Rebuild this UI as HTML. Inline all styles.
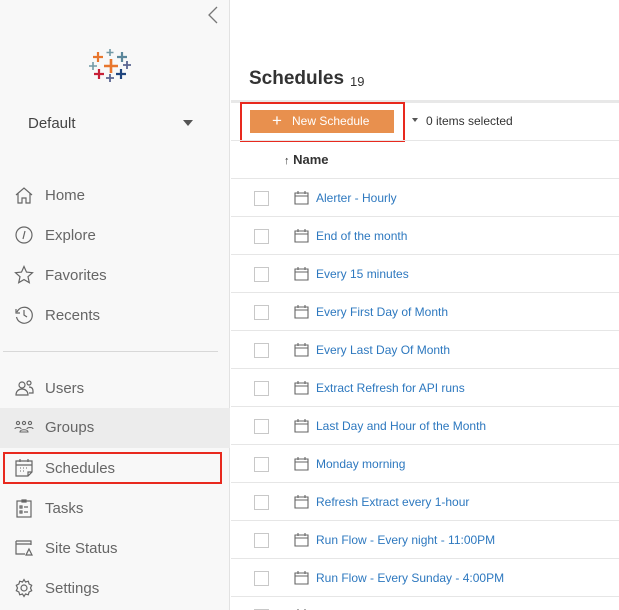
<!DOCTYPE html>
<html style="overflow:hidden;width:619px;height:610px"><head><style>
*{margin:0;padding:0;box-sizing:border-box}
body{width:619px;height:610px;overflow:hidden;background:#fff;font-family:"Liberation Sans",Arial,sans-serif;position:relative}
.side{position:absolute;left:0;top:0;width:230px;height:610px;background:#f8f8f8;border-right:1px solid #e2e2e2}
.nav{position:absolute;left:0;width:230px;height:40px;display:flex;align-items:center;font-size:15px;color:#666}
.nav svg{position:absolute;left:14px;top:9px}
.nav span{position:absolute;left:45px;top:11px}
.row{position:absolute;left:231px;right:0;height:38px;border-top:1px solid #e6e6e6}
.cb{position:absolute;left:23px;top:12px;width:15px;height:15px;border:1px solid #c8c8c8;background:#fff}
.cal{position:absolute;left:63px;top:11px}
.lk{position:absolute;left:85px;top:12px;font-size:12px;color:#2d78bf}
</style></head><body>
<div class="side">
<svg style="position:absolute;left:207px;top:6px" width="12" height="18"><path d="M10 1 L2 9 L10 17" stroke="#777" stroke-width="1.3" fill="none"/></svg>
<svg style="position:absolute;left:88px;top:47px" width="46" height="42">
<g stroke-width="2.2" fill="none">
<path d="M10 5v10M5 10h10" stroke="#e8762d"/>
<path d="M22 2v7M18.5 5.5h7" stroke="#7199a6" stroke-width="1.6"/>
<path d="M34 5v10M29 10h10" stroke="#5b879b"/>
<path d="M5 15v8M1 19h8" stroke="#7199a6" stroke-width="1.6"/>
<path d="M23 12v14M16 19h14" stroke="#e8762d" stroke-width="2.6"/>
<path d="M39 14v8M35 18h8" stroke="#5b6591" stroke-width="1.8"/>
<path d="M11 22v10M6 27h10" stroke="#c72037"/>
<path d="M33 22v10M28 27h10" stroke="#1f457e"/>
<path d="M22 27v8M18 31h8" stroke="#5b6591" stroke-width="1.8"/>
</g></svg>
<div style="position:absolute;left:28px;top:115px;font-size:15px;color:#444">Default</div>
<div style="position:absolute;left:183px;top:120px;border-left:5px solid transparent;border-right:5px solid transparent;border-top:6px solid #555"></div>
<div class="nav" style="top:176px"><svg width="20" height="20" fill="none" stroke="#666" stroke-width="1.2"><path d="M2 10L10 3l8 7M4 8v10h4v-5h4v5h4V8"/></svg><span>Home</span></div>
<div class="nav" style="top:216px"><svg width="20" height="20" fill="none" stroke="#666" stroke-width="1.2"><circle cx="10" cy="10" r="8"/><path d="M11 6l-2 8"/></svg><span>Explore</span></div>
<div class="nav" style="top:256px"><svg width="20" height="20" fill="none" stroke="#666" stroke-width="1.2"><path d="M10 1.5l2.5 5.6 6 .6-4.5 4 1.3 6-5.3-3.1-5.3 3.1 1.3-6-4.5-4 6-.6z"/></svg><span>Favorites</span></div>
<div class="nav" style="top:296px"><svg width="20" height="20" fill="none" stroke="#666" stroke-width="1.2"><path d="M3 7a8 8 0 1 1-.5 5M2 4v4h4M10 5v5l3 2"/></svg><span>Recents</span></div>
<div style="position:absolute;left:3px;top:351px;width:215px;height:1px;background:#d8d8d8"></div>
<div class="nav" style="top:369px"><svg width="20" height="20" fill="none" stroke="#666" stroke-width="1.2"><circle cx="8" cy="7" r="3"/><circle cx="15" cy="5" r="2"/><path d="M2 17c0-4 3-6 6-6s6 2 6 6zM15 9c2 0 4 1 4 4v2h-4"/></svg><span>Users</span></div>
<div class="nav" style="top:408px;background:#ececec"><svg width="20" height="20" fill="none" stroke="#666" stroke-width="1.1"><circle cx="4" cy="6" r="1.6"/><circle cx="10" cy="6" r="1.6"/><circle cx="16" cy="6" r="1.6"/><path d="M1 12c0-2 6-2 6 0M13 12c0-2 6-2 6 0M6 15c0-3 8-3 8 0z"/></svg><span>Groups</span></div>
<div class="nav" style="top:449px"><svg width="20" height="20" fill="none" stroke="#666" stroke-width="1.2"><path d="M2 3h16v11l-4 4H2zM2 7h16M6 1v3M14 1v3M14 18v-4h4"/><path d="M6 10h1M9 10h1M12 10h1M6 13h1M9 13h1" stroke-width="1"/></svg><span>Schedules</span></div>
<div style="position:absolute;left:3px;top:452px;width:219px;height:32px;border:2px solid #e8291e"></div>
<div class="nav" style="top:489px"><svg width="20" height="20" fill="none" stroke="#666" stroke-width="1.2"><rect x="3" y="3" width="14" height="16"/><path d="M8 2h4v2H8zM6 8h2v2H6zM6 13h2v2H6zM10 9h4M10 14h4"/></svg><span>Tasks</span></div>
<div class="nav" style="top:529px"><svg width="20" height="20" fill="none" stroke="#666" stroke-width="1.2"><path d="M2 3h15v4M2 3v13h9M2 6h15M15 11l3 6h-6z"/></svg><span>Site Status</span></div>
<div class="nav" style="top:569px"><svg width="20" height="20" fill="none" stroke="#666" stroke-width="1.2"><circle cx="10" cy="10" r="3"/><path d="M10 1.5l1.5 2.5 2.8-.8.8 2.8 2.6 1.3-1.2 2.7 1.2 2.7-2.6 1.3-.8 2.8-2.8-.8L10 18.5l-1.5-2.5-2.8.8-.8-2.8-2.6-1.3 1.2-2.7-1.2-2.7 2.6-1.3.8-2.8 2.8.8z"/></svg><span>Settings</span></div>
</div>
<div style="position:absolute;left:249px;top:68px;font-size:19px;color:#333;font-weight:bold">Schedules</div>
<div style="position:absolute;left:350px;top:74px;font-size:13px;color:#333">19</div>
<div style="position:absolute;left:231px;top:100px;right:0;height:3px;background:#e8e8e8"></div>
<div style="position:absolute;left:250px;top:110px;width:144px;height:23px;background:#e8904e;color:#fff;font-size:12px;line-height:23px"><span style="position:absolute;left:22px;top:-1px;font-size:17px;font-weight:300">+</span><span style="position:absolute;left:42px">New Schedule</span></div>
<div style="position:absolute;left:240px;top:102px;width:165px;height:40px;border:2px solid #e8291e"></div>
<div style="position:absolute;left:412px;top:118px;border-left:3px solid transparent;border-right:3px solid transparent;border-top:4px solid #555"></div>
<div style="position:absolute;left:426px;top:114px;font-size:12px;color:#333">0 items selected</div>
<div style="position:absolute;left:231px;top:140px;right:0;height:1px;background:#e6e6e6"></div>
<div style="position:absolute;left:284px;top:152px;font-size:13px;color:#333;font-weight:bold"><span style="font-size:11px">↑</span> Name</div>
<div id="rows"></div>
<script>
var n=["Alerter - Hourly","End of the month","Every 15 minutes","Every First Day of Month","Every Last Day Of Month","Extract Refresh for API runs","Last Day and Hour of the Month","Monday morning","Refresh Extract every 1-hour","Run Flow - Every night - 11:00PM","Run Flow - Every Sunday - 4:00PM","Run Flow - Every Sunday - 4:00AM"];
var h="";for(var i=0;i<n.length;i++){var t=178+38*i;var hh=Math.min(38,610-t);h+='<div class="row" style="top:'+t+'px;height:'+hh+'px;overflow:hidden"><div class="cb"></div><svg class="cal" width="15" height="15" fill="none" stroke="#666" stroke-width="1.1"><path d="M1 3h13v11H1zM1 6h13M4 1v3M11 1v3"/></svg><div class="lk">'+n[i]+'</div></div>';}
document.getElementById("rows").innerHTML=h;
</script>
</body></html>
